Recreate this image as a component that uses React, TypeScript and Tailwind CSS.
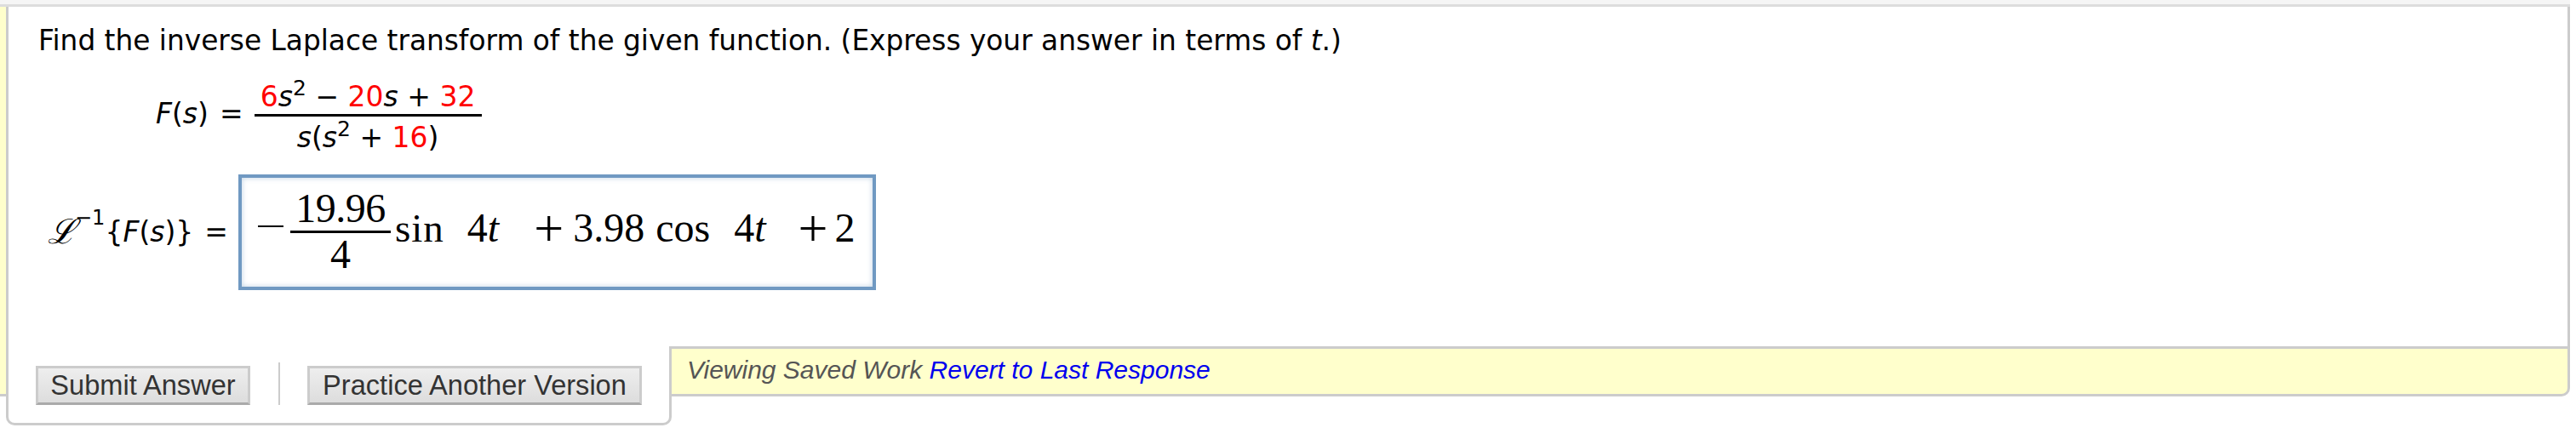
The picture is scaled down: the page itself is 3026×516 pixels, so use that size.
export default function App() {
  const sans = "font-['DejaVu_Sans','Liberation_Sans',sans-serif]";
  const serif = "font-['Liberation_Serif',serif]";
  const red = "text-[#ff0000]";
  return (
    <div className="w-[3026px] h-[516px] bg-white overflow-hidden">
      <div className="w-[3019px]">
        <div className="h-[8px] bg-[#f5f5f5] border-b-[3px] border-[#dddddd]" />
        <div className="flex h-[399px]">
          <div className="w-[7px] bg-[#ffffcc]" />
          <div className={`flex-1 bg-white border-x-[3px] border-[#cccccc] pl-[35px] text-black ${sans}`}>
            <p className="text-[32.8px] leading-[38px] mt-[21px] whitespace-nowrap">
              Find the inverse Laplace transform of the given function. (Express your answer in terms of <i>t</i>.)
            </p>
            <div className="flex items-center ml-[138px] mt-[25px] text-[33px] h-[84px]">
              <span className="italic">F<span className="not-italic">(</span>s<span className="not-italic">)</span></span>
              <span className="ml-[13px]">=</span>
              <div className="ml-[13px] flex flex-col items-center w-[267px] leading-[38px] mt-[7px]">
                <div className="border-b-[3px] border-black w-full text-center pb-[1px] whitespace-nowrap">
                  <span className={red}>6</span><i>s</i><sup className="text-[25px] leading-none">2</sup> − <span className={red}>20</span><i>s</i> + <span className={red}>32</span>
                </div>
                <div className="text-center pt-[6px] whitespace-nowrap">
                  <i>s</i>(<i>s</i><sup className="text-[25px] leading-none">2</sup> + <span className={red}>16</span>)
                </div>
              </div>
            </div>
            <div className="flex items-center mt-[29px] h-[136px]">
              <div className="ml-[11px] w-[224px] flex items-center whitespace-nowrap text-[33px]">
                <span className={`italic ${serif} text-[40px] leading-none`}>ℒ</span>
                <sup className="text-[24px] leading-none ml-[-1px] -mt-[10px]">−1</sup>
                <span>{"{"}<i>F</i>(<i>s</i>){"}"}</span>
                <span className="ml-[13px]">=</span>
              </div>
              <div className={`w-[749px] h-[136px] border-[4px] border-[#7099c2] shadow-[inset_0_0_6px_rgba(112,153,194,0.45)] bg-white flex items-center pl-[19px] pb-[10px] whitespace-nowrap ${serif} text-[48px] text-black`}>
                <span className="w-[30px] h-[2px] bg-black -mt-[4px]" />
                <div className="ml-[8px] w-[118px] flex flex-col items-center mt-[7px] leading-[50px]">
                  <div className="border-b-[3px] border-black w-full text-center pb-[1px] tracking-[-0.5px]">19.96</div>
                  <div className="text-center">4</div>
                </div>
                <span className="ml-[5px] text-[47px] tracking-[1px]">sin</span>
                <span className="ml-[27px]">4<i>t</i></span>
                <span className="ml-[41px] text-[62px] leading-none">+</span>
                <span className="ml-[11px]">3.98</span>
                <span className="ml-[13px]">cos</span>
                <span className="ml-[28px]">4<i>t</i></span>
                <span className="ml-[38px] text-[62px] leading-none">+</span>
                <span className="ml-[8px]">2</span>
              </div>
            </div>
          </div>
        </div>
        <div className="flex items-start">
          <div className="w-[7px] h-[59px] bg-[#ffffcc] border-b-[3px] border-[#cccccc]" />
          <div className="w-[782px] h-[93px] bg-white border-x-[3px] border-b-[3px] border-[#cccccc] rounded-b-[10px] flex items-start pl-[32px] pt-[19px]">
            <button className="w-[252px] h-[46px] mt-[4px] bg-gradient-to-b from-[#eeeeee] to-[#dddddd] border-[3px] border-[#cccccc] border-b-[#aaaaaa] text-[#333333] text-[32.6px] leading-none font-['Liberation_Sans',sans-serif] whitespace-nowrap">
              Submit Answer
            </button>
            <div className="ml-[33px] w-[2px] h-[50px] bg-[#cccccc]" />
            <button className="ml-[32px] w-[393px] h-[46px] mt-[4px] bg-gradient-to-b from-[#eeeeee] to-[#dddddd] border-[3px] border-[#cccccc] border-b-[#aaaaaa] text-[#333333] text-[32.6px] leading-none font-['Liberation_Sans',sans-serif] whitespace-nowrap">
              Practice Another Version
            </button>
          </div>
          <div className="flex-1 h-[59px] bg-[#ffffcc] border-y-[3px] border-r-[3px] border-[#cccccc] rounded-br-[10px] pl-[18px] pt-[7px] text-[30px] leading-[36px] italic font-['Liberation_Sans',sans-serif] text-[#555555] whitespace-nowrap">
            Viewing Saved Work <a className="text-[#0000ee]">Revert to Last Response</a>
          </div>
        </div>
      </div>
    </div>
  );
}
